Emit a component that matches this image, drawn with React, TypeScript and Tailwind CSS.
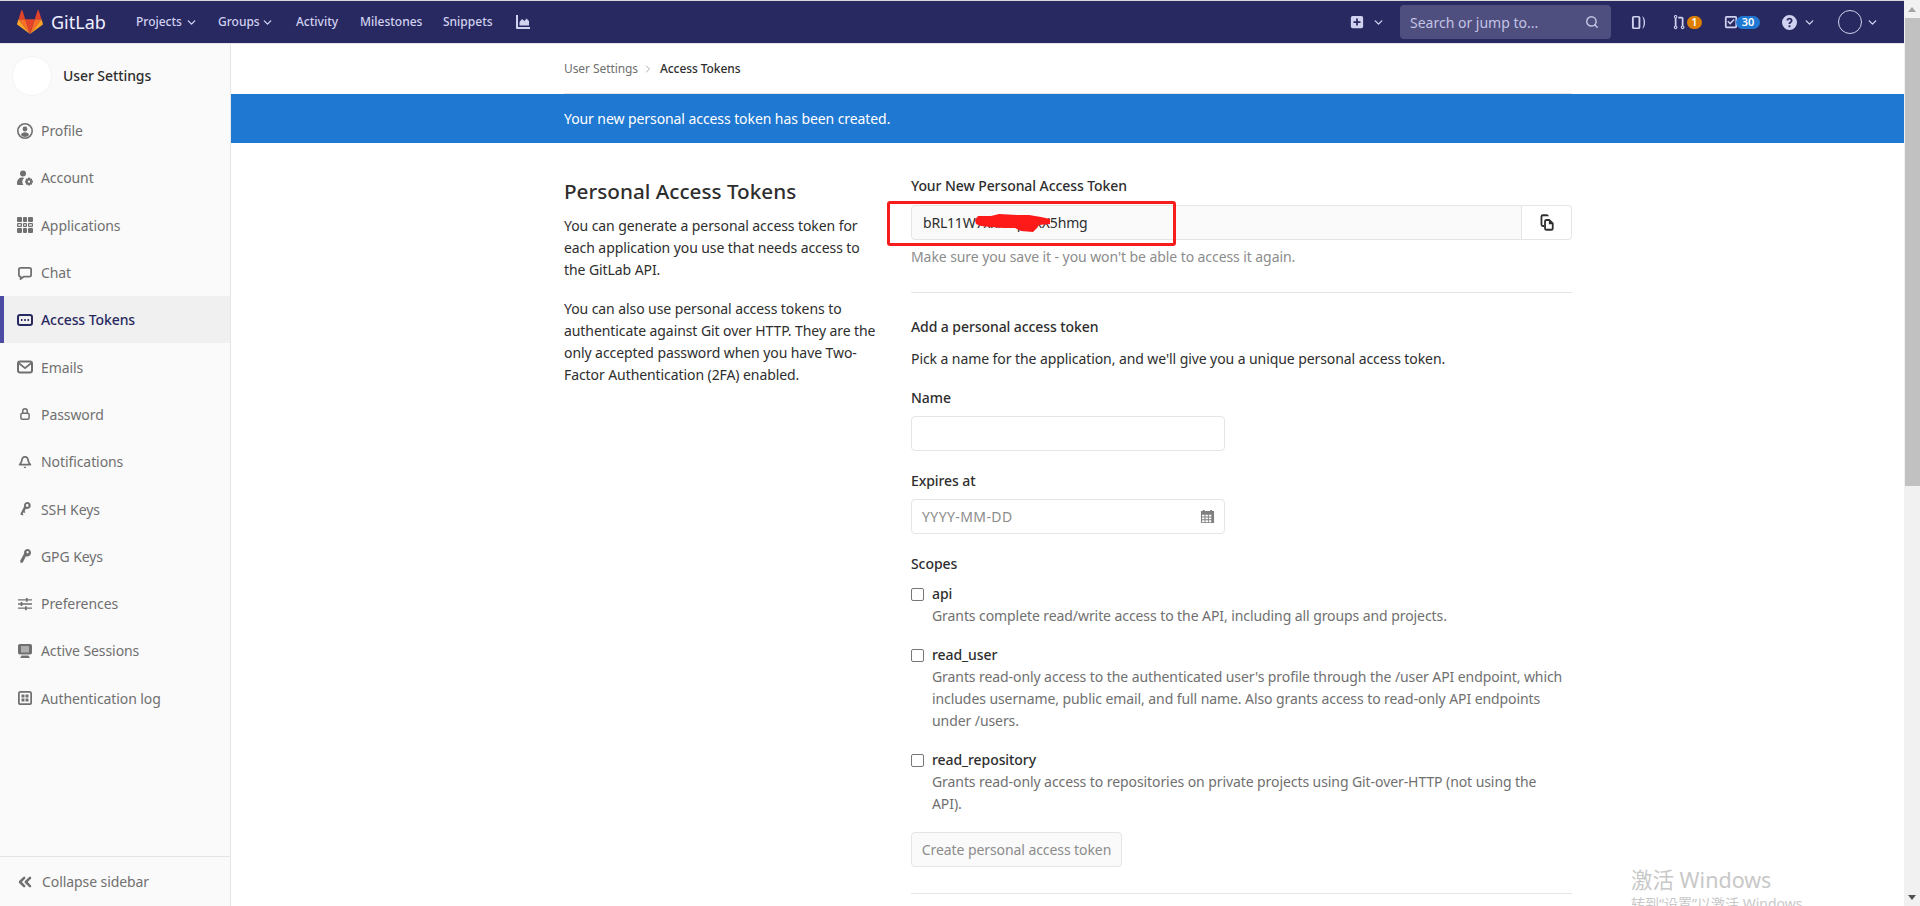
import React, { ReactNode } from 'react'
import { ChevronDown, ChevronRight, Search, ChevronsLeft } from 'lucide-react'

const FONT = 'font-["Noto_Sans","Noto_Sans_CJK_SC",sans-serif]'

function Svg({ children, className = 'w-4 h-4' }: { children: ReactNode; className?: string }) {
  return (
    <svg viewBox="0 0 16 16" fill="currentColor" fillRule="evenodd" className={className}>
      {children}
    </svg>
  )
}

// sidebar icons, drawn after the GitLab icon set
const icons: Record<string, ReactNode> = {
  profile: (
    <Svg>
      <path d="M8 0a8 8 0 1 1 0 16A8 8 0 0 1 8 0zm0 1.600a6.400 6.400 0 1 0 0 12.800A6.400 6.400 0 0 0 8 1.600z" />
      <path d="M8 3.600a2.400 2.400 0 1 1 0 4.800 2.400 2.400 0 0 1 0-4.800zM3.900 12c.6-1.800 2.200-2.800 4.100-2.800s3.500 1 4.100 2.800A6 6 0 0 1 8 14a6 6 0 0 1-4.100-2z" />
    </Svg>
  ),
  account: (
    <Svg>
      <path d="M6 .5a3 3 0 1 1 0 6 3 3 0 0 1 0-6zM0 13c0-3.500 2.500-5.500 5-5.500 1 0 1.800.2 2.400.6A4.500 4.500 0 0 0 6.500 15H1a1 1 0 0 1-1-1v-1z" />
      <path d="M11.200 7.500h1.600l.3 1.300 1-.6 1.200 1.200-.6 1 1.300.4v1.600l-1.300.3.6 1.100-1.200 1.200-1-.6-.3 1.100h-1.600l-.3-1.100-1.100.6-1.200-1.200.6-1.100-1.200-.3v-1.600l1.200-.4-.6-1 1.200-1.200 1.100.6.3-1.300zM12 10.400a1.200 1.200 0 1 0 0 2.400 1.200 1.200 0 0 0 0-2.400z" />
    </Svg>
  ),
  apps: (
    <Svg>
      <path d="M1 0h3a1 1 0 0 1 1 1v3a1 1 0 0 1-1 1H1a1 1 0 0 1-1-1V1a1 1 0 0 1 1-1zM7 0h2a1 1 0 0 1 1 1v3a1 1 0 0 1-1 1H7a1 1 0 0 1-1-1V1a1 1 0 0 1 1-1zM12 0h3a1 1 0 0 1 1 1v3a1 1 0 0 1-1 1h-3a1 1 0 0 1-1-1V1a1 1 0 0 1 1-1z" />
      <path d="M1 6h3a1 1 0 0 1 1 1v2a1 1 0 0 1-1 1H1a1 1 0 0 1-1-1V7a1 1 0 0 1 1-1zm.2 1.200v1.600h2.600V7.200H1.200zM7 6h2a1 1 0 0 1 1 1v2a1 1 0 0 1-1 1H7a1 1 0 0 1-1-1V7a1 1 0 0 1 1-1zm.2 1.200v1.600h1.600V7.200H7.200zM12 6h3a1 1 0 0 1 1 1v2a1 1 0 0 1-1 1h-3a1 1 0 0 1-1-1V7a1 1 0 0 1 1-1zm.2 1.200v1.600h2.600V7.200h-2.600z" />
      <path d="M1 11h3a1 1 0 0 1 1 1v3a1 1 0 0 1-1 1H1a1 1 0 0 1-1-1v-3a1 1 0 0 1 1-1zM7 11h2a1 1 0 0 1 1 1v3a1 1 0 0 1-1 1H7a1 1 0 0 1-1-1v-3a1 1 0 0 1 1-1zM12 11h3a1 1 0 0 1 1 1v3a1 1 0 0 1-1 1h-3a1 1 0 0 1-1-1v-3a1 1 0 0 1 1-1z" />
    </Svg>
  ),
  chat: (
    <Svg className="w-[14px] h-[14px]">
      <path d="M3 1h10a3 3 0 0 1 3 3v6a3 3 0 0 1-3 3H7l-4 3c-.5.300-1 0-1-.5V13a2.500 2.500 0 0 1-2-2.500V4a3 3 0 0 1 3-3zm0 2a1 1 0 0 0-1 1v6.500a.8.800 0 0 0 .8.700H4v1.600L6.400 11H13a1 1 0 0 0 1-1V4a1 1 0 0 0-1-1H3z" />
    </Svg>
  ),
  token: (
    <Svg>
      <path d="M3 2h10a3 3 0 0 1 3 3v6a3 3 0 0 1-3 3H3a3 3 0 0 1-3-3V5a3 3 0 0 1 3-3zm0 2a1 1 0 0 0-1 1v6a1 1 0 0 0 1 1h10a1 1 0 0 0 1-1V5a1 1 0 0 0-1-1H3z" />
      <path d="M4 7h1.500v2H4zM7.200 7h1.600v2H7.200zM10.500 7H12v2h-1.500z" />
    </Svg>
  ),
  email: (
    <Svg>
      <path d="M3 1.500h10a3 3 0 0 1 3 3v7a3 3 0 0 1-3 3H3a3 3 0 0 1-3-3v-7a3 3 0 0 1 3-3zm-.6 2.100L8 8l5.600-4.400c-.2-.1-.4-.1-.6-.1H3c-.2 0-.4 0-.6.100zM2 5.500v6a1 1 0 0 0 1 1h10a1 1 0 0 0 1-1v-6L8.600 9.800a1 1 0 0 1-1.200 0L2 5.500z" />
    </Svg>
  ),
  lock: (
    <Svg className="w-[12px] h-[12px]">
      <path d="M8 0a4 4 0 0 1 4 4v2.100a3 3 0 0 1 2.500 2.900v4a3 3 0 0 1-3 3h-7a3 3 0 0 1-3-3V9A3 3 0 0 1 4 6.100V4a4 4 0 0 1 4-4zm0 2a2 2 0 0 0-2 2v2h4V4a2 2 0 0 0-2-2zM4.500 8a1 1 0 0 0-1 1v4a1 1 0 0 0 1 1h7a1 1 0 0 0 1-1V9a1 1 0 0 0-1-1z" />
    </Svg>
  ),
  bell: (
    <Svg className="w-[14px] h-[14px]">
      <path d="M8 1c3 0 4.300 2.500 4.600 4.800.2 1.700.9 3.300 2.200 4.600.7.700.3 1.600-.6 1.600H1.800c-.9 0-1.300-.9-.6-1.600 1.300-1.300 2-2.900 2.200-4.600C3.700 3.500 5 1 8 1zm0 2c-1.700 0-2.400 1.500-2.600 3.100-.2 1.500-.7 2.800-1.500 3.900h8.200c-.8-1.100-1.300-2.400-1.500-3.900C10.400 4.500 9.700 3 8 3zM6.500 13.500h3a1.500 1.500 0 0 1-3 0z" />
    </Svg>
  ),
  ssh: (
    <Svg className="w-[14px] h-[14px]">
      <path d="M10.500 0a4 4 0 1 1-1.500 7.700L7.500 10.500l1 .8-1 1.200-1.200-.7-1 1.800 1 .7-1 1.200L2.500 14 7 5.200A4 4 0 0 1 10.500 0zm0 2.400a1.600 1.600 0 1 0 0 3.200 1.600 1.600 0 0 0 0-3.200z" />
    </Svg>
  ),
  gpg: (
    <Svg className="w-[14px] h-[14px]">
      <path d="M10.500 0a4.300 4.300 0 1 1-1.500 8.300L5.500 15.300 3 16l-.5-2.500L7 5.200A4.300 4.300 0 0 1 10.500 0zm.5 2.400a1.300 1.300 0 1 0 0 2.600 1.300 1.300 0 0 0 0-2.600z" />
    </Svg>
  ),
  prefs: (
    <Svg className="w-[14px] h-[14px]">
      <path d="M0 2.500h9V1h2v1.500h5v1.600h-5v1.400H9V4.100H0zM0 7.200h3V5.800h2v1.400h11v1.600H5v1.400H3V8.800H0zM0 11.900h8v-1.400h2v1.400h6v1.600h-6V15H8v-1.500H0z" />
    </Svg>
  ),
  session: (
    <Svg className="w-[14px] h-[14px]">
      <path d="M2 0h12a2 2 0 0 1 2 2v8a2 2 0 0 1-2 2H2a2 2 0 0 1-2-2V2a2 2 0 0 1 2-2zm1.500 2.500v7h9v-7z" />
      <path opacity=".55" d="M3.500 2.500h9v7h-9z" />
      <path d="M4 13h8l1.500 3h-11z" />
    </Svg>
  ),
  log: (
    <Svg className="w-[14px] h-[14px]">
      <path d="M3 0h10a3 3 0 0 1 3 3v10a3 3 0 0 1-3 3H3a3 3 0 0 1-3-3V3a3 3 0 0 1 3-3zm0 2a1 1 0 0 0-1 1v10a1 1 0 0 0 1 1h10a1 1 0 0 0 1-1V3a1 1 0 0 0-1-1z" />
      <path d="M4 4h3.400v3.400H4zM8.600 4H12v3.400H8.600zM4 8.600h3.400V12H4zM8.600 8.600H12V12H8.600z" />
    </Svg>
  ),
}

const sidebarItems = [
  { label: 'Profile', icon: 'profile' },
  { label: 'Account', icon: 'account' },
  { label: 'Applications', icon: 'apps' },
  { label: 'Chat', icon: 'chat' },
  { label: 'Access Tokens', icon: 'token', active: true },
  { label: 'Emails', icon: 'email' },
  { label: 'Password', icon: 'lock' },
  { label: 'Notifications', icon: 'bell' },
  { label: 'SSH Keys', icon: 'ssh' },
  { label: 'GPG Keys', icon: 'gpg' },
  { label: 'Preferences', icon: 'prefs' },
  { label: 'Active Sessions', icon: 'session' },
  { label: 'Authentication log', icon: 'log' },
]

function Logo() {
  return (
    <svg viewBox="0 0 36 36" className="w-[26px] h-[26px]">
      <path fill="#e24329" d="M18 34.500 24.600 14.100H11.400z" />
      <path fill="#fc6d26" d="M18 34.500 11.400 14.100H2.100z" />
      <path fill="#fca326" d="M2.100 14.100.1 20.300a1.400 1.400 0 0 0 .5 1.500L18 34.500z" />
      <path fill="#e24329" d="M2.100 14.100h9.300L7.400 1.800a.7.700 0 0 0-1.300 0z" />
      <path fill="#fc6d26" d="M18 34.500 24.600 14.100h9.300z" />
      <path fill="#fca326" d="M33.900 14.100l2 6.200a1.400 1.400 0 0 1-.5 1.500L18 34.500z" />
      <path fill="#e24329" d="M33.900 14.100h-9.300l4-12.300a.7.700 0 0 1 1.300 0z" />
    </svg>
  )
}

function TopBar() {
  return (
    <header className="h-[44px] shrink-0 bg-[#292961] border-t border-t-[#d9d9d9] border-b border-b-[#e5e5e5] flex items-center text-[#d1d1f0] text-[12px] font-medium">
      <div className="ml-[17px]"><Logo /></div>
      <span className="ml-[8px] text-[18px] font-normal text-[#f0f0ff] w-[85px]">GitLab</span>
      <span className="w-[47px]">Projects</span>
      <ChevronDown className="w-[13px] h-[13px] ml-[2px]" strokeWidth={2.5} />
      <span className="ml-[20px] w-[43px]">Groups</span>
      <ChevronDown className="w-[13px] h-[13px]" strokeWidth={2.5} />
      <span className="ml-[22px] w-[64px]">Activity</span>
      <span className="w-[83px]">Milestones</span>
      <span className="w-[72px]">Snippets</span>
      <Svg className="w-[16px] h-[16px]">
        <path d="M1 1h2v12h12v2H2a1 1 0 0 1-1-1z" />
        <path d="M4.500 8l2.500-3 2.500 2 2-2.500 2.500 2.500v4.500H4.500z" />
      </Svg>
      <div className="ml-auto flex items-center">
        <Svg className="w-[14px] h-[14px]">
          <path d="M3 1h10a2 2 0 0 1 2 2v10a2 2 0 0 1-2 2H3a2 2 0 0 1-2-2V3a2 2 0 0 1 2-2zm4 3v3H4v2h3v3h2V9h3V7H9V4z" />
        </Svg>
        <ChevronDown className="w-[13px] h-[13px] ml-[8px]" strokeWidth={2.5} />
        <div className="ml-[15px] w-[211px] h-[34px] rounded-[4px] bg-[#4e4e7f] flex items-center pl-[10px] pr-[12px] text-[14px] font-normal text-[#c4c4e4]">
          <span className="flex-1">Search or jump to...</span>
          <Search className="w-[14px] h-[14px]" strokeWidth={2.5} />
        </div>
        <Svg className="ml-[20px] w-[15px] h-[15px]">
          <path d="M3 1h5a2 2 0 0 1 2 2v10a2 2 0 0 1-2 2H3a2 2 0 0 1-2-2V3a2 2 0 0 1 2-2zm0 1.700V13.300h5V2.700zM12 1.500h.5c1.500 1 2.500 3.500 2.500 6.500s-1 5.500-2.500 6.500H12c1-1.500 1.500-3.800 1.500-6.500S13 3 12 1.500z" />
        </Svg>
        <div className="ml-[27px] flex items-center">
          <Svg className="w-[14px] h-[16px]">
            <path d="M3 0a2 2 0 0 1 1 3.700v8.600A2 2 0 1 1 2 12.300V3.700A2 2 0 0 1 3 0zm0 1.200a.8.800 0 1 0 0 1.600.8.800 0 0 0 0-1.600zm0 12a.8.800 0 1 0 0 1.600.8.800 0 0 0 0-1.600zM6 2h4a2 2 0 0 1 2 2v8.300a2 2 0 1 1-2 0V4H6zM11 13.200a.8.800 0 1 0 0 1.600.8.800 0 0 0 0-1.600z" />
          </Svg>
          <span className="w-[15px] h-[13px] rounded-full bg-[#de7e00] text-white text-[11px] font-semibold flex items-center justify-center">1</span>
        </div>
        <div className="ml-[22px] flex items-center">
          <Svg className="w-[14px] h-[14px]">
            <path d="M3 1h10a2 2 0 0 1 2 2v10a2 2 0 0 1-2 2H3a2 2 0 0 1-2-2V3a2 2 0 0 1 2-2zm0 2v10h10V3zM5 6.500l2 2 4-4 1.200 1.200L7 11 3.800 7.700z" />
          </Svg>
          <span className="-ml-[2px] w-[24px] h-[13px] rounded-full bg-[#1f78d1] text-white text-[11px] font-semibold flex items-center justify-center">30</span>
        </div>
        <Svg className="ml-[22px] w-[15px] h-[15px]">
          <path d="M8 0a8 8 0 1 1 0 16A8 8 0 0 1 8 0zM7 11v2h2v-2zM8 3C6.200 3 5 4 4.800 5.700l1.800.3C6.700 5.200 7.200 4.700 8 4.700c.8 0 1.300.4 1.300 1.100 0 .6-.3.900-1 1.400-.9.600-1.300 1.200-1.300 2.200v.3h2v-.2c0-.5.200-.8.800-1.200C10.600 7.800 11.200 7 11.200 5.800 11.200 4.100 9.900 3 8 3z" />
        </Svg>
        <ChevronDown className="w-[13px] h-[13px] ml-[6px]" strokeWidth={2.5} />
        <div className="ml-[22px] w-[24px] h-[24px] rounded-full border border-[#d1d1f0]" />
        <ChevronDown className="w-[13px] h-[13px] ml-[4px] mr-[25px]" strokeWidth={2.5} />
      </div>
    </header>
  )
}

function Sidebar() {
  return (
    <aside className="w-[231px] shrink-0 bg-[#fafafa] border-r border-[#e5e5e5] flex flex-col text-[14px] tracking-[-0.08px] text-[#707070]">
      <div className="h-[63px] shrink-0 flex items-center pl-[12px]">
        <div className="w-[40px] h-[40px] rounded-full bg-white border border-[#f5f5f5]" />
        <span className="ml-[11px] font-medium text-[#2e2e2e]">User Settings</span>
      </div>
      <nav className="flex flex-col">
        {sidebarItems.map(item => (
          <div
            key={item.label}
            className={
              item.active
                ? 'h-[47.3px] flex items-center pl-[13px] border-l-4 border-[#4b4ba3] bg-[#f0f0f0] text-[#292961] font-medium'
                : 'h-[47.3px] flex items-center pl-[17px]'
            }
          >
            <span className={item.active ? 'w-4 flex justify-center text-[#292961]' : 'w-4 flex justify-center text-[#707070]'}>{icons[item.icon]}</span>
            <span className="ml-[8px]">{item.label}</span>
          </div>
        ))}
      </nav>
      <div className="mt-auto h-[50px] shrink-0 border-t border-[#e5e5e5] flex items-center pl-[15px]">
        <ChevronsLeft className="w-[20px] h-[20px]" strokeWidth={3} />
        <span className="ml-[7px]">Collapse sidebar</span>
      </div>
    </aside>
  )
}

function Label({ children, className = '' }: { children: ReactNode; className?: string }) {
  return <div className={`font-medium text-[#2e2e2e] ${className}`}>{children}</div>
}

function Scope({ name, desc, className = '' }: { name: string; desc: string; className?: string }) {
  return (
    <div className={className}>
      <div className="flex items-center">
        <span className="w-[13px] h-[13px] rounded-[2px] border border-[#767676] bg-white" />
        <span className="ml-[8px] font-medium text-[#2e2e2e]">{name}</span>
      </div>
      <p className="ml-[21px] w-[632px] text-[#707070]">{desc}</p>
    </div>
  )
}

function TokenForm() {
  return (
    <div className="w-[661px] pt-[32px]">
      <Label>Your New Personal Access Token</Label>
      <div className="relative mt-[8px] flex h-[35px]">
        <div className="flex-1 bg-[#fafafa] border border-[#e5e5e5] rounded-l-[4px] flex items-center pl-[11px] tracking-[-0.2px] text-[#2e2e2e]">
          bRL11W7xxxxqxxxX5hmg
        </div>
        <div className="w-[50px] border border-l-0 border-[#e5e5e5] rounded-r-[4px] bg-white flex items-center justify-center text-[#2e2e2e]">
          <Svg className="w-[19px] h-[19px]">
            <path d="M5 1h3a2 2 0 0 1 2 1.800H8.300A.5.500 0 0 0 8 2.700H5a.5.500 0 0 0-.5.500V10H6v1.700H5A2 2 0 0 1 3 9.700V3a2 2 0 0 1 2-2z" />
            <path d="M8 5h2.500L14 8.500V13a2 2 0 0 1-2 2H8a2 2 0 0 1-2-2V7a2 2 0 0 1 2-2zm0 1.700a.5.500 0 0 0-.5.500v5.600c0 .3.200.5.500.5h4c.3 0 .5-.2.500-.5V9.500H10V6.700z" />
          </Svg>
        </div>
        <svg viewBox="0 0 75 18" preserveAspectRatio="none" className="absolute left-[64px] top-[9px] w-[75px] h-[18px]">
          <path fill="#ff1a1a" d="M0 6 3 2 16 2 24 0 42 1 54 1 66 3 75 5 75 10 64 11 62 14 58 18 46 17 40 14 28 14 16 13 6 12 1 10z" />
        </svg>
        <div className="absolute -left-[24px] -top-[4px] w-[289px] h-[45px] border-[3px] border-[#f71d1d] rounded-[3px]" />
      </div>
      <p className="mt-[6px] text-[#8c8c8c]">Make sure you save it - you won't be able to access it again.</p>
      <div className="mt-[24px] h-px bg-[#e5e5e5]" />
      <Label className="mt-[23px]">Add a personal access token</Label>
      <p className="mt-[10px] text-[#2e2e2e]">Pick a name for the application, and we'll give you a unique personal access token.</p>
      <Label className="mt-[17px]">Name</Label>
      <div className="mt-[7px] w-[314px] h-[35px] bg-white border border-[#e5e5e5] rounded-[4px]" />
      <Label className="mt-[19px]">Expires at</Label>
      <div className="mt-[7px] w-[314px] h-[35px] bg-white border border-[#e5e5e5] rounded-[4px] flex items-center justify-between pl-[10px] pr-[9px] text-[#8c8c8c]">
        <span className="tracking-[0.4px]">YYYY-MM-DD</span>
        <Svg className="w-[15px] h-[15px] text-[#808080]">
          <path d="M3 1h2v1h6V1h2v1h2v13H1V2h2zm-.8 5v2h2.600V6zm3.600 0v2h2.600V6zm3.600 0v2H12V6zm3.300 0v2h.1V6zM2.200 9v2h2.600V9zm3.600 0v2h2.600V9zm3.600 0v2H12V9zM2.200 12v2h2.600v-2zm3.600 0v2h2.600v-2zm3.600 0v2H12v-2z" />
        </Svg>
      </div>
      <Label className="mt-[19px]">Scopes</Label>
      <Scope className="mt-[8px]" name="api" desc="Grants complete read/write access to the API, including all groups and projects." />
      <Scope className="mt-[17px]" name="read_user" desc="Grants read-only access to the authenticated user's profile through the /user API endpoint, which includes username, public email, and full name. Also grants access to read-only API endpoints under /users." />
      <Scope className="mt-[17px]" name="read_repository" desc="Grants read-only access to repositories on private projects using Git-over-HTTP (not using the API)." />
      <div className="mt-[17px] w-[211px] h-[35px] bg-[#fafafa] border border-[#e5e5e5] rounded-[4px] flex items-center justify-center text-[#8c8c8c]">
        Create personal access token
      </div>
      <div className="mt-[26px] h-px bg-[#e5e5e5]" />
    </div>
  )
}

function Content() {
  return (
    <main className="flex-1 min-w-0 bg-white text-[14px] leading-[22px] tracking-[-0.08px]">
      <div className="ml-[333px] w-[1008px] h-[50px] border-b border-[#e5e5e5] flex items-center text-[12px] text-[#707070]">
        <span>User Settings</span>
        <ChevronRight className="w-[12px] h-[12px] ml-[4px] mr-[6px] text-[#909090]" strokeWidth={1.5} />
        <span className="font-medium text-[#2e2e2e]">Access Tokens</span>
      </div>
      <div className="h-[49px] bg-[#1f78d1] flex items-center pl-[333px] text-white">
        Your new personal access token has been created.
      </div>
      <div className="ml-[333px] w-[1008px] flex">
        <div className="w-[347px] shrink-0 pt-[35px] text-[#2e2e2e]">
          <h4 className="text-[20.700px] leading-[26px] tracking-normal font-medium">Personal Access Tokens</h4>
          <p className="mt-[11px] w-[317px]">You can generate a personal access token for each application you use that needs access to the GitLab API.</p>
          <p className="mt-[17px] w-[317px]">You can also use personal access tokens to authenticate against Git over HTTP. They are the only accepted password when you have Two-Factor Authentication (2FA) enabled.</p>
        </div>
        <TokenForm />
      </div>
    </main>
  )
}

function Scrollbar() {
  return (
    <div className="w-[16px] shrink-0 bg-[#f1f1f1] flex flex-col items-center">
      <div className="h-[18px] flex items-center justify-center">
        <div className="w-0 h-0 border-x-[4px] border-x-transparent border-b-[5px] border-b-[#a3a3a3]" />
      </div>
      <div className="w-[15px] ml-px h-[468px] bg-[#c1c1c1]" />
      <div className="mt-auto h-[18px] flex items-center justify-center">
        <div className="w-0 h-0 border-x-[4px] border-x-transparent border-t-[5px] border-t-[#505050]" />
      </div>
    </div>
  )
}

export default function App() {
  return (
    <div className={`relative h-[906px] w-full flex overflow-hidden bg-white ${FONT}`}>
      <div className="flex-1 min-w-0 flex flex-col">
        <TopBar />
        <div className="flex-1 min-h-0 flex">
          <Sidebar />
          <Content />
        </div>
      </div>
      <Scrollbar />
      <div className="absolute left-[1631px] top-[866px] text-[#c8c8c8] pointer-events-none">
        <div className="text-[21.500px] leading-[28px]">激活 Windows</div>
        <div className="text-[14px] leading-[20px]">转到“设置”以激活 Windows。</div>
      </div>
    </div>
  )
}
